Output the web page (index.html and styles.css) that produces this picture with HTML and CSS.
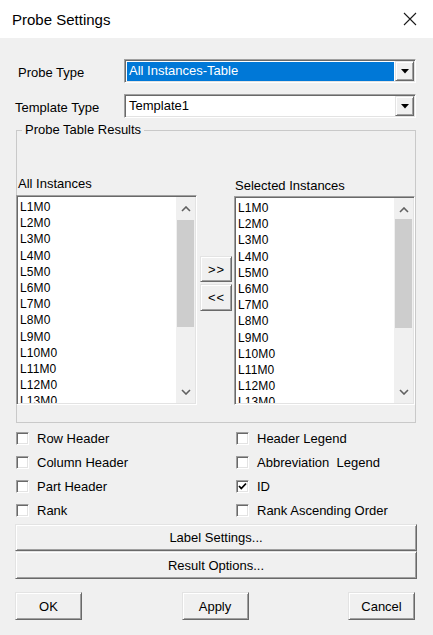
FILE: index.html
```html
<!DOCTYPE html>
<html>
<head>
<meta charset="utf-8">
<link rel="stylesheet" href="styles.css">
</head>
<body>
<div class="window">
  <div class="titlebar">
    <span class="title">Probe Settings</span>
    <svg class="close" width="14" height="14" viewBox="0 0 14 14"><path d="M1 1 L13 13 M13 1 L1 13" stroke="#1a1a1a" stroke-width="1.1" fill="none"/></svg>
  </div>
  <div class="dlg">
    <div class="field row1">
      <span class="flabel l1">Probe Type</span>
      <div class="combo">
        <div class="combo-text selected">All Instances-Table</div>
        <div class="combo-btn"><svg width="8" height="5" viewBox="0 0 8 5"><path d="M0 0 H8 L4 4.5 Z" fill="#000"/></svg></div>
      </div>
    </div>
    <div class="field row2">
      <span class="flabel">Template Type</span>
      <div class="combo">
        <div class="combo-text">Template1</div>
        <div class="combo-btn"><svg width="8" height="5" viewBox="0 0 8 5"><path d="M0 0 H8 L4 4.5 Z" fill="#000"/></svg></div>
      </div>
    </div>

    <div class="group">
      <span class="legend">Probe Table Results</span>
      <div class="group-inner">
        <div class="col col-left">
          <div class="col-label">All Instances</div>
          <div class="listbox">
            <div class="items">
              <div>L1M0</div><div>L2M0</div><div>L3M0</div><div>L4M0</div><div>L5M0</div><div>L6M0</div><div>L7M0</div><div>L8M0</div><div>L9M0</div><div>L10M0</div><div>L11M0</div><div>L12M0</div><div>L13M0</div>
            </div>
            <div class="vscroll">
              <div class="sarrow"><svg width="10" height="6" viewBox="0 0 10 6"><path d="M1 5 L5 1 L9 5" stroke="#606060" stroke-width="1.6" fill="none"/></svg></div>
              <div class="thumb t1"></div>
              <div class="track"></div>
              <div class="sarrow"><svg width="10" height="6" viewBox="0 0 10 6"><path d="M1 1 L5 5 L9 1" stroke="#606060" stroke-width="1.6" fill="none"/></svg></div>
            </div>
          </div>
        </div>
        <div class="movebtns">
          <div class="btn mv">&gt;&gt;</div>
          <div class="btn mv">&lt;&lt;</div>
        </div>
        <div class="col col-right">
          <div class="col-label">Selected Instances</div>
          <div class="listbox lb2">
            <div class="items">
              <div>L1M0</div><div>L2M0</div><div>L3M0</div><div>L4M0</div><div>L5M0</div><div>L6M0</div><div>L7M0</div><div>L8M0</div><div>L9M0</div><div>L10M0</div><div>L11M0</div><div>L12M0</div><div>L13M0</div>
            </div>
            <div class="vscroll">
              <div class="sarrow"><svg width="10" height="6" viewBox="0 0 10 6"><path d="M1 5 L5 1 L9 5" stroke="#606060" stroke-width="1.6" fill="none"/></svg></div>
              <div class="thumb t2"></div>
              <div class="track"></div>
              <div class="sarrow"><svg width="10" height="6" viewBox="0 0 10 6"><path d="M1 1 L5 5 L9 1" stroke="#606060" stroke-width="1.6" fill="none"/></svg></div>
            </div>
          </div>
        </div>
      </div>
    </div>

    <div class="checks">
      <label class="chk"><span class="box"></span>Row Header</label>
      <label class="chk"><span class="box"></span>Header Legend</label>
      <label class="chk"><span class="box"></span>Column Header</label>
      <label class="chk"><span class="box"></span>Abbreviation&nbsp; Legend</label>
      <label class="chk"><span class="box"></span>Part Header</label>
      <label class="chk"><span class="box"><svg width="9" height="9" viewBox="0 0 9 9"><path d="M1 4 L3.3 6.5 L8 1.5" stroke="#000" stroke-width="1.8" fill="none"/></svg></span>ID</label>
      <label class="chk"><span class="box"></span>Rank</label>
      <label class="chk"><span class="box"></span>Rank Ascending Order</label>
    </div>

    <div class="btn wide w1">Label Settings...</div>
    <div class="btn wide w2">Result Options...</div>

    <div class="footer">
      <div class="btn small">OK</div>
      <div class="btn small">Apply</div>
      <div class="btn small">Cancel</div>
    </div>
  </div>
</div>
</body>
</html>
```

FILE: styles.css
```css
* { box-sizing: border-box; }
html, body { margin: 0; padding: 0; }
body {
  font-family: "Liberation Sans", Arial, sans-serif;
  font-size: 13px;
  color: #000;
  background: #f0f0f0;
}
.window { width: 433px; height: 635px; display: flex; flex-direction: column; }
.titlebar {
  height: 38px;
  background: #fff;
  display: flex;
  align-items: center;
  justify-content: space-between;
  padding: 0 16px 0 12px;
}
.title { font-size: 15px; color: #000; }
.close { display: block; }
.dlg {
  flex: 1;
  background: #f0f0f0;
  padding: 21px 17px 0 15px;
  display: flex;
  flex-direction: column;
}
.field { display: flex; align-items: center; height: 24px; }
.row2 { margin-top: 11px; }
.flabel { width: 109px; padding-top: 3px; }
.l1 { padding-left: 3px; }
.combo {
  flex: 1;
  height: 24px;
  display: flex;
  align-items: stretch;
  background: #fff;
  border-top: 1px solid #a0a0a0;
  border-left: 1px solid #a0a0a0;
  border-right: 1px solid #fff;
  border-bottom: 1px solid #fff;
  box-shadow: inset 1px 1px 0 #696969, inset -1px -1px 0 #e3e3e3;
  padding: 2px 1px 1px 2px;
}
.combo-text {
  flex: 1;
  line-height: 18px;
  padding-left: 2px;
  margin-right: 1px;
}
.combo-text.selected { background: #0078d7; color: #fff; }
.combo-btn {
  width: 19px;
  margin-top: -1px;
  display: flex;
  align-items: center;
  justify-content: center;
  background: #f0f0f0;
  border-top: 1px solid #e3e3e3;
  border-left: 1px solid #e3e3e3;
  border-right: 1px solid #696969;
  border-bottom: 1px solid #696969;
  box-shadow: inset 1px 1px 0 #fff, inset -1px -1px 0 #a0a0a0;
}
.combo-btn svg { display: block; }

.group {
  position: relative;
  margin: 12px 0 0 1px;
  height: 293px;
  box-shadow: inset 0 0 0 1px #c9c9c9;
}
.legend {
  position: absolute;
  left: 6px;
  top: -8px;
  padding: 0 3px;
  background: #f0f0f0;
  line-height: 16px;
}
.group-inner { display: flex; }
.col { width: 181px; display: flex; flex-direction: column; }
.col-left { padding-top: 46px; }
.col-right { padding-top: 48px; margin-left: 2px; }
.col-label { line-height: 16px; height: 16px; margin-bottom: 3px; padding-left: 2px; }
.col-right .col-label { margin-bottom: 2px; padding-left: 1px; }
.listbox {
  height: 210px;
  display: flex;
  background: #fff;
  border-top: 1px solid #a0a0a0;
  border-left: 1px solid #a0a0a0;
  border-right: 1px solid #fff;
  border-bottom: 1px solid #fff;
  box-shadow: inset 1px 1px 0 #696969, inset -1px -1px 0 #e3e3e3;
  padding: 1px 1px 1px 1px;
  overflow: hidden;
}
.lb2 { height: 209px; }
.items {
  flex: 1;
  padding: 2px 0 0 2px;
  font-size: 12px;
  line-height: 16.2px;
  overflow: hidden;
  letter-spacing: 0.1px;
}
.vscroll {
  width: 19px;
  background: #f0f0f0;
  display: flex;
  flex-direction: column;
  margin-right: 0;
}
.sarrow {
  height: 23px;
  display: flex;
  align-items: center;
  justify-content: center;
}
.sarrow svg { display: block; }
.thumb { background: #cdcdcd; margin: 0 1px; }
.t1 { height: 107px; }
.t2 { height: 109px; margin-top: -2px; }
.track { flex: 1; }

.btn {
  background: #f0f0f0;
  border-top: 1px solid #e3e3e3;
  border-left: 1px solid #e3e3e3;
  border-right: 1px solid #696969;
  border-bottom: 1px solid #696969;
  box-shadow: inset 1px 1px 0 #fff, inset -1px -1px 0 #a0a0a0;
  display: flex;
  align-items: center;
  justify-content: center;
}
.movebtns {
  margin-left: 3px;
  width: 32px;
  padding-top: 126px;
  display: flex;
  flex-direction: column;
  gap: 2px;
}
.mv { height: 26px; font-size: 13px; letter-spacing: 1px; padding-left: 1px; }
.mv + .mv { height: 27px; }

.checks {
  margin-top: 3px;
  display: grid;
  grid-template-columns: 220px 1fr;
  grid-auto-rows: 24px;
}
.chk { display: flex; align-items: center; padding-left: 1px; }
.box {
  width: 13px;
  height: 13px;
  margin-right: 8px;
  background: #fff;
  border-top: 1px solid #a0a0a0;
  border-left: 1px solid #a0a0a0;
  border-right: 1px solid #fff;
  border-bottom: 1px solid #fff;
  box-shadow: inset 1px 1px 0 #696969, inset -1px -1px 0 #e3e3e3;
  display: flex;
  align-items: center;
  justify-content: center;
}
.box svg { display: block; }

.wide { margin-right: -1px; }
.w1 { margin-top: 2px; height: 27px; }
.w2 { height: 28px; }
.footer {
  margin-top: 13px;
  margin-right: 1px;
  display: flex;
  justify-content: space-between;
}
.small { width: 67px; height: 28px; }
```
